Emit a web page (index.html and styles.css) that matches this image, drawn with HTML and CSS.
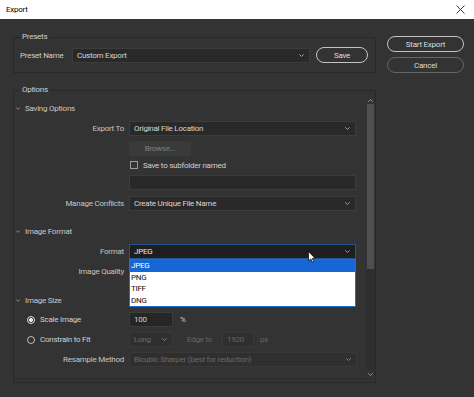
FILE: index.html
```html
<!DOCTYPE html>
<html lang="en">

<head>
    <meta charset="UTF-8">
    <meta name="viewport" content="width=device-width, initial-scale=1.0">
    <title>Export</title>
    <link rel="stylesheet" href="styles.css">
</head>

<body>
    <div class="titlebar">
        <span class="title">Export</span>
        <svg class="close" width="9" height="9" viewBox="0 0 9 9"><path d="M0.5 0.5 L8.5 8.5 M8.5 0.5 L0.5 8.5" stroke="#222" stroke-width="0.9" fill="none"/></svg>
    </div>
    <div class="dialog">
        <div class="main">
            <fieldset class="group presets">
                <legend>Presets</legend>
                <div class="preset_row">
                    <span class="preset_label">Preset Name</span>
                    <div class="select preset_select">
                        <span>Custom Export</span>
                        <svg class="chev" width="5" height="3" viewBox="0 0 5 3"><path d="M0.3 0.3 L2.5 2.5 L4.7 0.3" stroke="#a8a8a8" stroke-width="0.9" fill="none"/></svg>
                    </div>
                    <button class="pill save">Save</button>
                </div>
            </fieldset>

            <fieldset class="group options">
                <legend>Options</legend>
                <div class="scroll">
                    <div class="scroll_content">
                        <!-- Saving Options -->
                        <div class="section_head">
                            <svg width="4" height="3" viewBox="0 0 4 3"><path d="M0.2 0.4 L2 2.4 L3.8 0.4" stroke="#9a9a9a" stroke-width="0.8" fill="none"/></svg>
                            <span>Saving Options</span>
                        </div>
                        <div class="row r_export">
                            <span class="label">Export To</span>
                            <div class="select wide">
                                <span>Original File Location</span>
                                <svg class="chev" width="5" height="3" viewBox="0 0 5 3"><path d="M0.3 0.3 L2.5 2.5 L4.7 0.3" stroke="#a8a8a8" stroke-width="0.9" fill="none"/></svg>
                            </div>
                        </div>
                        <div class="row r_browse">
                            <span class="label"></span>
                            <button class="browse">Browse...</button>
                        </div>
                        <div class="row r_check">
                            <span class="label"></span>
                            <span class="checkbox"></span>
                            <span class="check_text">Save to subfolder named</span>
                        </div>
                        <div class="row r_input">
                            <span class="label"></span>
                            <div class="text_input wide"></div>
                        </div>
                        <div class="row r_manage">
                            <span class="label">Manage Conflicts</span>
                            <div class="select wide">
                                <span>Create Unique File Name</span>
                                <svg class="chev" width="5" height="3" viewBox="0 0 5 3"><path d="M0.3 0.3 L2.5 2.5 L4.7 0.3" stroke="#a8a8a8" stroke-width="0.9" fill="none"/></svg>
                            </div>
                        </div>

                        <!-- Image Format -->
                        <div class="section_head s_format">
                            <svg width="4" height="3" viewBox="0 0 4 3"><path d="M0.2 0.4 L2 2.4 L3.8 0.4" stroke="#9a9a9a" stroke-width="0.8" fill="none"/></svg>
                            <span>Image Format</span>
                        </div>
                        <div class="row r_format">
                            <span class="label">Format</span>
                            <div class="format_wrap">
                                <div class="select wide focused">
                                    <span>JPEG</span>
                                    <svg class="chev" width="5" height="3" viewBox="0 0 5 3"><path d="M0.3 0.3 L2.5 2.5 L4.7 0.3" stroke="#a8a8a8" stroke-width="0.9" fill="none"/></svg>
                                </div>
                                <ul class="dropdown">
                                    <li class="selected">JPEG</li>
                                    <li>PNG</li>
                                    <li>TIFF</li>
                                    <li>DNG</li>
                                </ul>
                                <svg class="cursor" width="8" height="12" viewBox="0 0 8 12"><path d="M0.5 0.5 L0.5 10 L2.8 7.9 L4.4 11.3 L5.8 10.6 L4.3 7.4 L7.2 7.4 Z" fill="#fff" stroke="#111" stroke-width="0.8"/></svg>
                            </div>
                        </div>
                        <div class="row r_quality">
                            <span class="label">Image Quality</span>
                        </div>

                        <!-- Image Size -->
                        <div class="section_head s_size">
                            <svg width="4" height="3" viewBox="0 0 4 3"><path d="M0.2 0.4 L2 2.4 L3.8 0.4" stroke="#9a9a9a" stroke-width="0.8" fill="none"/></svg>
                            <span>Image Size</span>
                        </div>
                        <div class="row r_scale">
                            <span class="label radio_label"><span class="radio checked"></span>Scale Image</span>
                            <div class="text_input small">100</div>
                            <span class="unit">%</span>
                        </div>
                        <div class="row r_constrain">
                            <span class="label radio_label"><span class="radio"></span>Constrain to Fit</span>
                            <div class="select disabled long">
                                <span>Long</span>
                                <svg class="chev" width="5" height="3" viewBox="0 0 5 3"><path d="M0.3 0.3 L2.5 2.5 L4.7 0.3" stroke="#8a8a8a" stroke-width="0.9" fill="none"/></svg>
                            </div>
                            <span class="dim edge">Edge to</span>
                            <div class="text_input edge_input dim">1920</div>
                            <span class="dim px">px</span>
                        </div>
                        <div class="row r_resample">
                            <span class="label">Resample Method</span>
                            <div class="select disabled resample">
                                <span>Bicubic Sharper (best for reduction)</span>
                                <svg class="chev" width="5" height="3" viewBox="0 0 5 3"><path d="M0.3 0.3 L2.5 2.5 L4.7 0.3" stroke="#8a8a8a" stroke-width="0.9" fill="none"/></svg>
                            </div>
                        </div>
                    </div>
                    <div class="scrollbar">
                        <div class="sb_arrow">
                            <svg width="5" height="3" viewBox="0 0 5 3"><path d="M0.3 2.7 L2.5 0.5 L4.7 2.7" stroke="#a0a0a0" stroke-width="0.9" fill="none"/></svg>
                        </div>
                        <div class="sb_thumb"></div>
                        <div class="sb_track"></div>
                        <div class="sb_arrow">
                            <svg width="5" height="3" viewBox="0 0 5 3"><path d="M0.3 0.3 L2.5 2.5 L4.7 0.3" stroke="#a0a0a0" stroke-width="0.9" fill="none"/></svg>
                        </div>
                    </div>
                </div>
            </fieldset>
        </div>
        <div class="side">
            <button class="pill">Start Export</button>
            <button class="pill cancel">Cancel</button>
        </div>
    </div>
</body>

</html>
```

FILE: styles.css
```css
* {
    margin: 0;
    padding: 0;
    box-sizing: border-box;
}

body {
    width: 474px;
    height: 397px;
    overflow: hidden;
    background-color: #333;
    font-family: Roboto, "Liberation Sans", sans-serif;
    font-size: 8px;
    letter-spacing: -0.25px;
    color: #cdcdcd;
}

button {
    font: inherit;
    letter-spacing: inherit;
    color: inherit;
    background: none;
    border: none;
}

ul {
    list-style: none;
}

/* window title */
.titlebar {
    height: 19px;
    background-color: #fff;
    color: #000;
    display: flex;
    align-items: center;
    justify-content: space-between;
    padding: 0 9px 0 6px;
}

.dialog {
    display: flex;
    height: 378px;
    padding-left: 13px;
}

.main {
    width: 363px;
    padding-top: 12px;
}

.side {
    width: 77px;
    margin-left: 11px;
    padding-top: 17px;
    display: flex;
    flex-direction: column;
    gap: 5px;
}

/* groups */
.group {
    border: 1px solid #282828;
}

.group legend {
    line-height: 12px;
    padding: 0 2px;
    color: #cfcfcf;
}

.presets {
    padding: 4px 6px 9px;
}

.preset_row {
    display: flex;
    align-items: center;
    height: 16px;
}

.preset_label {
    width: 52px;
}

.preset_select {
    width: 238px;
}

.pill {
    height: 16px;
    border: 1.5px solid #c4c4c4;
    border-radius: 9px;
    color: #dcdcdc;
    text-align: center;
}

.save {
    width: 52px;
    margin-left: 6px;
}

.cancel {
    border-color: #666;
}

.options {
    margin-top: 11px;
    padding: 0 0 3px;
}

.options legend {
    margin-left: 6px;
}

/* selects and inputs */
.select {
    height: 15px;
    display: flex;
    align-items: center;
    justify-content: space-between;
    padding: 0 5px 0 4px;
    background-color: #292929;
    border: 1px solid #3c3c3c;
    color: #d6d6d6;
}

.wide {
    width: 227px;
}

.select.focused {
    background-color: #1e1e1e;
    border-color: #22548f;
    color: #e6e6e6;
}

.select.disabled {
    background-color: #2f2f2f;
    border-color: #383838;
    color: #6a6a6a;
}

.text_input {
    height: 15px;
    background-color: #292929;
    border: 1px solid #3c3c3c;
    padding-left: 4px;
    line-height: 13px;
    color: #d0d0d0;
}

/* scroll area */
.scroll {
    display: flex;
    height: 283px;
    border-bottom: 1px solid #2c2c2c;
}

.scroll_content {
    flex: 1;
    overflow: hidden;
    padding-top: 6px;
}

.scrollbar {
    width: 9px;
    display: flex;
    flex-direction: column;
}

.sb_arrow {
    height: 8px;
    display: flex;
    align-items: center;
    justify-content: center;
}

.sb_thumb {
    height: 165px;
    margin: 0 1px;
    background-color: #4f4f4f;
}

.sb_track {
    flex: 1;
    background-color: #2e2e2e;
}

.section_head {
    height: 12px;
    display: flex;
    align-items: center;
    gap: 5px;
    padding-left: 2px;
    color: #c8c8c8;
}

.s_format {
    margin-top: 14px;
}

.s_size {
    margin-top: 15px;
}

.row {
    display: flex;
    align-items: center;
    height: 15px;
}

.row .label {
    width: 110px;
    margin-right: 5px;
    text-align: right;
    color: #c4c4c4;
    flex-shrink: 0;
}

.r_export {
    margin-top: 7px;
}

.r_browse {
    margin-top: 5px;
}

.browse {
    width: 62px;
    height: 15px;
    background-color: #3a3a3a;
    color: #808080;
}

.r_check {
    margin-top: 4px;
    height: 10px;
}

.checkbox {
    width: 8px;
    height: 8px;
    margin-left: 1px;
    border: 1px solid #9a9a9a;
}

.check_text {
    margin-left: 5px;
    color: #d0d0d0;
}

.r_input {
    margin-top: 5px;
}

.r_manage {
    margin-top: 6px;
}

.r_format {
    margin-top: 7px;
}

.format_wrap {
    position: relative;
}

.dropdown {
    position: absolute;
    top: 100%;
    left: 0;
    width: 227px;
    background-color: #fff;
    border: 1px solid #1f6fd0;
    color: #111;
    z-index: 5;
}

.dropdown li {
    height: 11.5px;
    line-height: 11.5px;
    padding-left: 1px;
}

.dropdown .selected {
    background-color: #1766d6;
    color: #fff;
}

.cursor {
    position: absolute;
    left: 179px;
    top: 7px;
    z-index: 6;
}

.r_quality {
    margin-top: 5px;
}

.r_scale {
    margin-top: 6px;
}

.radio_label {
    display: flex;
    align-items: center;
    gap: 5px;
    padding-left: 13px;
    text-align: left !important;
    color: #d0d0d0 !important;
}

.radio {
    width: 8px;
    height: 8px;
    border: 1px solid #bdbdbd;
    border-radius: 50%;
}

.radio.checked {
    border-color: #e0e0e0;
    background: radial-gradient(circle, #e8e8e8 0 1.8px, transparent 2.2px);
}

.small {
    width: 44px;
    background-color: #262626;
}

.unit {
    margin-left: 7px;
}

.r_constrain {
    margin-top: 5px;
}

.long {
    width: 44px;
}

.dim {
    color: #666;
}

.edge {
    margin-left: 14px;
}

.edge_input {
    width: 32px;
    margin-left: 10px;
    background-color: #2f2f2f;
    border-color: #383838;
    color: #666;
}

.px {
    margin-left: 6px;
}

.r_resample {
    margin-top: 5px;
}

.resample {
    width: 228px;
}
```
